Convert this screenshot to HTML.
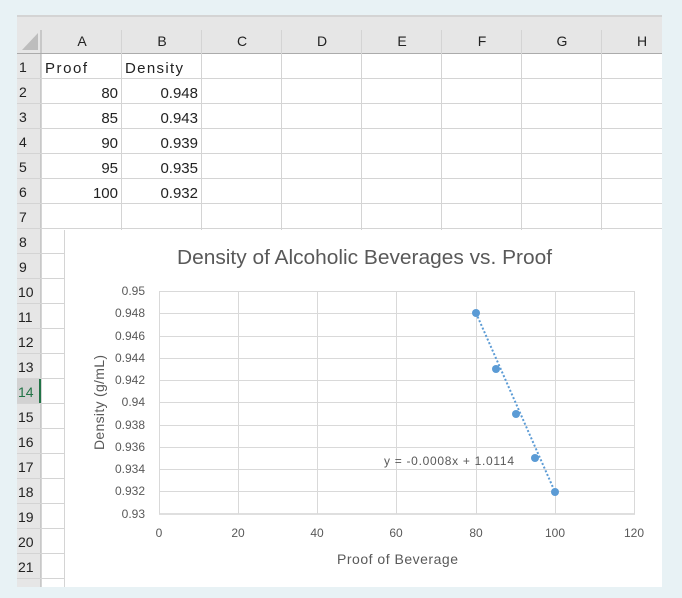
<!DOCTYPE html><html><head><style>
body{margin:0;width:682px;height:598px;background:#e8f2f5;position:relative;overflow:hidden;font-family:"Liberation Sans",sans-serif}
.a{position:absolute}
</style></head><body>
<svg class="a" style="left:0;top:0" width="682" height="598" font-family="Liberation Sans, sans-serif">
<rect x="17" y="15" width="645" height="572" fill="#fff"/>
<rect x="17" y="15" width="645" height="38" fill="#e6e6e6"/>
<rect x="17" y="15" width="645" height="2" fill="#d4d4d4"/>
<rect x="17" y="53" width="24" height="534" fill="#e6e6e6"/>
<polygon points="38,33 38,50 22,50" fill="#bdbdbd"/>
<g stroke="#d4d4d4" stroke-width="1">
<line x1="41" y1="30" x2="41" y2="587" stroke="#ababab"/>
<line x1="17" y1="53.5" x2="662" y2="53.5" stroke="#ababab"/>
<line x1="121.5" y1="30" x2="121.5" y2="230"/><line x1="201.5" y1="30" x2="201.5" y2="230"/>
<line x1="281.5" y1="30" x2="281.5" y2="230"/><line x1="361.5" y1="30" x2="361.5" y2="230"/>
<line x1="441.5" y1="30" x2="441.5" y2="230"/><line x1="521.5" y1="30" x2="521.5" y2="230"/>
<line x1="601.5" y1="30" x2="601.5" y2="230"/><line x1="64.5" y1="230" x2="64.5" y2="587"/>
</g>
<g stroke="#d4d4d4">
<line x1="17" y1="78.5" x2="662" y2="78.5"/><line x1="17" y1="103.5" x2="662" y2="103.5"/>
<line x1="17" y1="128.5" x2="662" y2="128.5"/><line x1="17" y1="153.5" x2="662" y2="153.5"/>
<line x1="17" y1="178.5" x2="662" y2="178.5"/><line x1="17" y1="203.5" x2="662" y2="203.5"/>
<line x1="17" y1="228.5" x2="662" y2="228.5"/>
<line x1="17" y1="253.5" x2="65" y2="253.5"/><line x1="17" y1="278.5" x2="65" y2="278.5"/>
<line x1="17" y1="303.5" x2="65" y2="303.5"/><line x1="17" y1="328.5" x2="65" y2="328.5"/>
<line x1="17" y1="353.5" x2="65" y2="353.5"/><line x1="17" y1="378.5" x2="65" y2="378.5"/>
<line x1="17" y1="403.5" x2="65" y2="403.5"/><line x1="17" y1="428.5" x2="65" y2="428.5"/>
<line x1="17" y1="453.5" x2="65" y2="453.5"/><line x1="17" y1="478.5" x2="65" y2="478.5"/>
<line x1="17" y1="503.5" x2="65" y2="503.5"/><line x1="17" y1="528.5" x2="65" y2="528.5"/>
<line x1="17" y1="553.5" x2="65" y2="553.5"/><line x1="17" y1="578.5" x2="65" y2="578.5"/>
</g>
<rect x="17" y="379" width="24" height="24" fill="#d2d2d2"/><rect x="39" y="379" width="2" height="24" fill="#217346"/>
<g font-size="14" fill="#222" text-anchor="middle">
<text x="82" y="46">A</text><text x="162" y="46">B</text><text x="242" y="46">C</text><text x="322" y="46">D</text>
<text x="402" y="46">E</text><text x="482" y="46">F</text><text x="562" y="46">G</text><text x="642" y="46">H</text>
</g>
<g font-size="14" fill="#222">
<text x="19" y="72">1</text><text x="19" y="97">2</text><text x="19" y="122">3</text><text x="19" y="147">4</text>
<text x="19" y="172">5</text><text x="19" y="197">6</text><text x="19" y="222">7</text><text x="19" y="247">8</text>
<text x="19" y="272">9</text><text x="18" y="297">10</text><text x="18" y="322">11</text><text x="18" y="347">12</text>
<text x="18" y="372">13</text><text x="18" y="397" fill="#217346">14</text><text x="18" y="422">15</text><text x="18" y="447">16</text>
<text x="18" y="472">17</text><text x="18" y="497">18</text><text x="18" y="522">19</text><text x="18" y="547">20</text><text x="18" y="572">21</text>
</g>
<g font-size="15" fill="#222">
<text x="45" y="73" textLength="42">Proof</text><text x="125" y="73" textLength="58">Density</text>
</g>
<g font-size="15" fill="#222" text-anchor="end">
<text x="118" y="98">80</text><text x="118" y="123">85</text><text x="118" y="148">90</text><text x="118" y="173">95</text><text x="118" y="198">100</text>
<text x="198" y="98">0.948</text><text x="198" y="123">0.943</text><text x="198" y="148">0.939</text><text x="198" y="173">0.935</text><text x="198" y="198">0.932</text>
</g>
<rect x="65" y="230" width="597" height="357" fill="#fff"/>
<text x="177" y="264" font-size="20" fill="#595959" textLength="375" lengthAdjust="spacingAndGlyphs">Density of Alcoholic Beverages vs. Proof</text>
<g stroke="#d9d9d9">
<line x1="159" y1="291.5" x2="635" y2="291.5"/><line x1="159" y1="313.5" x2="635" y2="313.5"/><line x1="159" y1="336.5" x2="635" y2="336.5"/>
<line x1="159" y1="358.5" x2="635" y2="358.5"/><line x1="159" y1="380.5" x2="635" y2="380.5"/><line x1="159" y1="402.5" x2="635" y2="402.5"/>
<line x1="159" y1="425.5" x2="635" y2="425.5"/><line x1="159" y1="447.5" x2="635" y2="447.5"/><line x1="159" y1="469.5" x2="635" y2="469.5"/>
<line x1="159" y1="491.5" x2="635" y2="491.5"/><line x1="159" y1="514" x2="635" y2="514" stroke="#bfbfbf"/>
<line x1="159.5" y1="291" x2="159.5" y2="514"/><line x1="238.5" y1="291" x2="238.5" y2="514"/><line x1="317.5" y1="291" x2="317.5" y2="514"/>
<line x1="396.5" y1="291" x2="396.5" y2="514"/><line x1="476.5" y1="291" x2="476.5" y2="514"/><line x1="555.5" y1="291" x2="555.5" y2="514"/><line x1="634.5" y1="291" x2="634.5" y2="514"/>
</g>
<g font-size="12" fill="#595959" text-anchor="end">
<text x="145" y="295">0.95</text><text x="145" y="317">0.948</text><text x="145" y="340">0.946</text><text x="145" y="362">0.944</text>
<text x="145" y="384">0.942</text><text x="145" y="406">0.94</text><text x="145" y="429">0.938</text><text x="145" y="451">0.936</text>
<text x="145" y="473">0.934</text><text x="145" y="495">0.932</text><text x="145" y="518">0.93</text>
</g>
<g font-size="12" fill="#595959" text-anchor="middle">
<text x="159" y="537">0</text><text x="238" y="537">20</text><text x="317" y="537">40</text><text x="396" y="537">60</text>
<text x="476" y="537">80</text><text x="555" y="537">100</text><text x="634" y="537">120</text>
</g>
<text x="337" y="564" font-size="14" fill="#595959" textLength="121">Proof of Beverage</text>
<text transform="translate(104,450) rotate(-90)" font-size="14" fill="#595959" textLength="95">Density (g/mL)</text>
<line x1="476" y1="313" x2="555" y2="492" stroke="#5b9bd5" stroke-width="2" stroke-dasharray="2,2"/>
<g fill="#5b9bd5"><circle cx="476" cy="313" r="4"/><circle cx="496" cy="369" r="4"/><circle cx="516" cy="414" r="4"/><circle cx="535" cy="458" r="4"/><circle cx="555" cy="492" r="4"/></g>
<text x="384" y="465" font-size="12" fill="#595959" textLength="130">y = -0.0008x + 1.0114</text>
</svg>
</body></html>
